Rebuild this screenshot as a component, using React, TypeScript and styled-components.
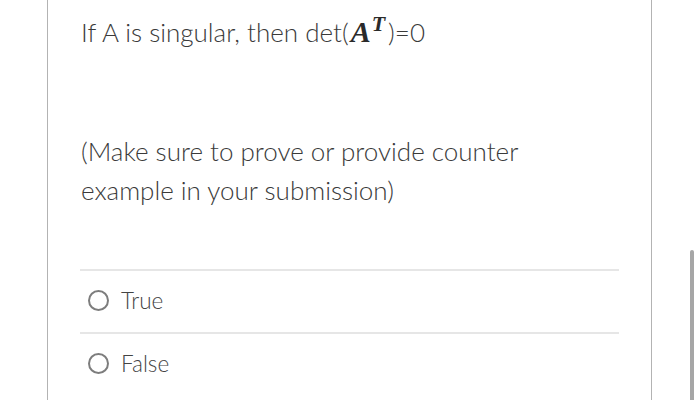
import React from "react";
import styled, { createGlobalStyle } from "styled-components";

const Global = createGlobalStyle`
  html, body { margin: 0; padding: 0; background: #fff; }
  body { font-family: Lato, "Noto Sans", sans-serif; color: #333; }
`;

const Page = styled.div`
  width: 700px;
  height: 400px;
  overflow: hidden;
  position: relative;
`;

const Card = styled.div`
  margin-left: 47px;
  width: 605px;
  height: 400px;
  border-left: 1px solid #b3b3b3;
  border-right: 1px solid #b3b3b3;
  padding: 12px 32px 0 32px;
  box-sizing: border-box;
`;

const Para = styled.p<{ $gap?: number }>`
  margin: 0 0 ${(p) => p.$gap ?? 0}px 0;
  font-size: 26px;
  font-weight: 300;
  line-height: 39px;
  color: #3a3a3a;
  padding-left: 1px;
`;

const MathA = styled.span`
  font-family: "Liberation Serif", "DejaVu Serif", serif;
  font-style: italic;
  font-weight: 700;
  font-size: 30px;
  color: #2a2a2a;
  padding-left: 2px;
  letter-spacing: 1px;
`;

const Sup = styled.sup`
  font-family: "Liberation Serif", "DejaVu Serif", serif;
  font-style: italic;
  font-weight: 700;
  font-size: 22px;
  line-height: 0;
  vertical-align: 11px;
  padding-right: 3px;
  color: #2a2a2a;
`;

const Answers = styled.div`
  margin-top: 59px;
`;

const Row = styled.label`
  display: flex;
  align-items: center;
  gap: 12px;
  height: 63px;
  border-top: 2px solid #e6e6e6;
  padding-left: 8px;
  padding-bottom: 3px;
  box-sizing: border-box;
  font-size: 22.5px;
  font-weight: 300;
  color: #444;
`;

const Radio = styled.span`
  width: 17px;
  height: 17px;
  border: 2px solid #7d7d7d;
  border-radius: 50%;
  flex-shrink: 0;
`;

const Scrollbar = styled.div`
  position: absolute;
  right: 6px;
  top: 250px;
  width: 4px;
  height: 160px;
  border-radius: 2px;
  background: #a6a6a6;
`;

export default function App() {
  return (
    <Page>
      <Global />
      <Card>
        <Para $gap={80}>
          If A is singular, then det(<MathA>A</MathA>
          <Sup>T</Sup>)=0
        </Para>
        <Para>
          (Make sure to prove or provide counter
          <br />
          example in your submission)
        </Para>
        <Answers>
          <Row>
            <Radio />
            True
          </Row>
          <Row>
            <Radio />
            False
          </Row>
        </Answers>
      </Card>
      <Scrollbar />
    </Page>
  );
}
